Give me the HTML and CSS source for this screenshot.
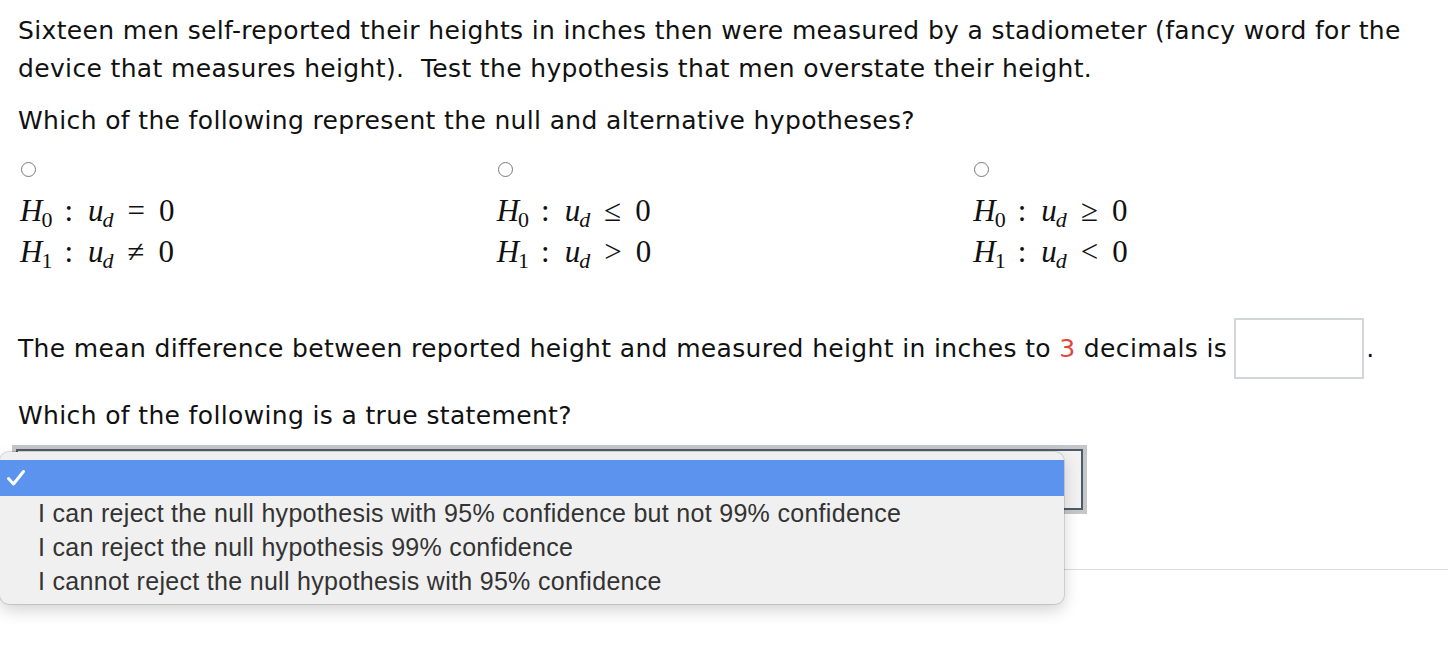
FILE: index.html
```html
<!DOCTYPE html>
<html>
<head>
<meta charset="utf-8">
<link rel="stylesheet" href="styles.css">
</head>
<body>
<div class="content">
  <p class="intro">Sixteen men self-reported their heights in inches then were measured by a stadiometer (fancy word for the device that measures height).&nbsp; Test the hypothesis that men overstate their height.</p>
  <p class="question">Which of the following represent the null and alternative hypotheses?</p>
  <div class="choices">
    <div class="choice">
      <span class="radio"></span>
      <div class="math"><i>H</i><sub>0</sub><span class="op">:</span><i>u</i><sub><i>d</i></sub><span class="rel">=</span>0</div>
      <div class="math"><i>H</i><sub>1</sub><span class="op">:</span><i>u</i><sub><i>d</i></sub><span class="rel">≠</span>0</div>
    </div>
    <div class="choice">
      <span class="radio"></span>
      <div class="math"><i>H</i><sub>0</sub><span class="op">:</span><i>u</i><sub><i>d</i></sub><span class="rel">≤</span>0</div>
      <div class="math"><i>H</i><sub>1</sub><span class="op">:</span><i>u</i><sub><i>d</i></sub><span class="rel">&gt;</span>0</div>
    </div>
    <div class="choice">
      <span class="radio"></span>
      <div class="math"><i>H</i><sub>0</sub><span class="op">:</span><i>u</i><sub><i>d</i></sub><span class="rel">≥</span>0</div>
      <div class="math"><i>H</i><sub>1</sub><span class="op">:</span><i>u</i><sub><i>d</i></sub><span class="rel">&lt;</span>0</div>
    </div>
  </div>
  <div class="mean-row">
    <span>The mean difference between reported height and measured height in inches to <span class="red">3</span> decimals is</span>
    <span class="answer-box"></span><span class="period">.</span>
  </div>
  <p class="question2">Which of the following is a true statement?</p>
  <div class="select-wrap">
    <div class="select"><div class="select-inner"></div></div>
    <div class="popup">
      <div class="opt selected">
        <svg class="check" width="20" height="18" viewBox="0 0 20 18"><path d="M2.5 9.5 L7.5 15 L17.5 2.5" fill="none" stroke="#fff" stroke-width="3" stroke-linecap="round" stroke-linejoin="round"/></svg>
      </div>
      <div class="opt">I can reject the null hypothesis with 95% confidence but not 99% confidence</div>
      <div class="opt">I can reject the null hypothesis 99% confidence</div>
      <div class="opt">I cannot reject the null hypothesis with 95% confidence</div>
    </div>
  </div>
  <hr class="rule">
</div>
</body>
</html>
```

FILE: styles.css
```css
html, body {
  margin: 0;
  padding: 0;
  background: #fff;
  min-height: 656px;
}
body {
  font-family: "DejaVu Sans", Verdana, sans-serif;
  font-size: 25px;
  letter-spacing: 0.35px;
  color: #111;
}
.content {
  padding: 12px 0 100px 18px;
}
p {
  margin: 0;
  line-height: 38px;
}
.intro {
  width: 1420px;
}
.question {
  margin-top: 14px;
}
.choices {
  display: flex;
  margin-top: 22px;
}
.choice {
  width: 478px;
  display: flex;
  flex-direction: column;
}
.radio {
  display: block;
  box-sizing: border-box;
  width: 15px;
  height: 15px;
  border: 1.7px solid #7a7a7a;
  border-radius: 50%;
  margin-left: 3px;
  margin-bottom: 13px;
}
.math {
  font-family: "Liberation Serif", "Times New Roman", serif;
  font-size: 31px;
  letter-spacing: 0;
  line-height: 41px;
  height: 41px;
  color: #111;
  white-space: nowrap;
  padding-left: 2px;
}
.math i {
  font-style: italic;
}
.math sub {
  font-size: 22px;
  vertical-align: -6px;
  line-height: 0;
  margin-left: -1px;
}
.op {
  margin: 0 15px 0 12px;
}
.rel {
  margin: 0 14px 0 14px;
}
.mean-row {
  display: flex;
  align-items: center;
  margin-top: 46px;
  height: 61px;
}
.red {
  color: #e2473c;
}
.answer-box {
  display: inline-block;
  width: 126px;
  height: 57px;
  border: 2px solid #d2d6db;
  margin-left: 7px;
}
.period {
  margin-left: 2px;
}
.question2 {
  margin-top: 18px;
}
.select-wrap {
  position: relative;
  margin-top: 10px;
  margin-left: -6px;
  width: 1075px;
  height: 69px;
}
.select {
  box-sizing: border-box;
  width: 1075px;
  height: 69px;
  border: 4px solid #c5c6c7;
}
.select-inner {
  box-sizing: border-box;
  height: 100%;
  border: 2px solid #4f5b66;
  background: #f2f2f2;
}
.popup {
  position: absolute;
  z-index: 2;
  left: -12px;
  top: 7px;
  width: 1064px;
  box-sizing: border-box;
  padding: 8px 0 6px 0;
  background: #f0f0f0;
  border-radius: 9px;
  box-shadow: 0 0 0 1px rgba(0,0,0,0.12), 0 6px 16px rgba(0,0,0,0.18);
  font-family: "Liberation Sans", Arial, sans-serif;
  font-size: 25px;
  letter-spacing: 0.3px;
  color: #333;
}
.opt {
  height: 34px;
  line-height: 34px;
  padding-left: 38px;
  white-space: nowrap;
}
.opt.selected {
  height: 36px;
  background: #5b93ef;
  position: relative;
}
.check {
  position: absolute;
  left: 6px;
  top: 9px;
}
.rule {
  margin: 55px 0 0 -18px;
  border: 0;
  border-top: 1px solid #dcdcdc;
  height: 0;
}
```
